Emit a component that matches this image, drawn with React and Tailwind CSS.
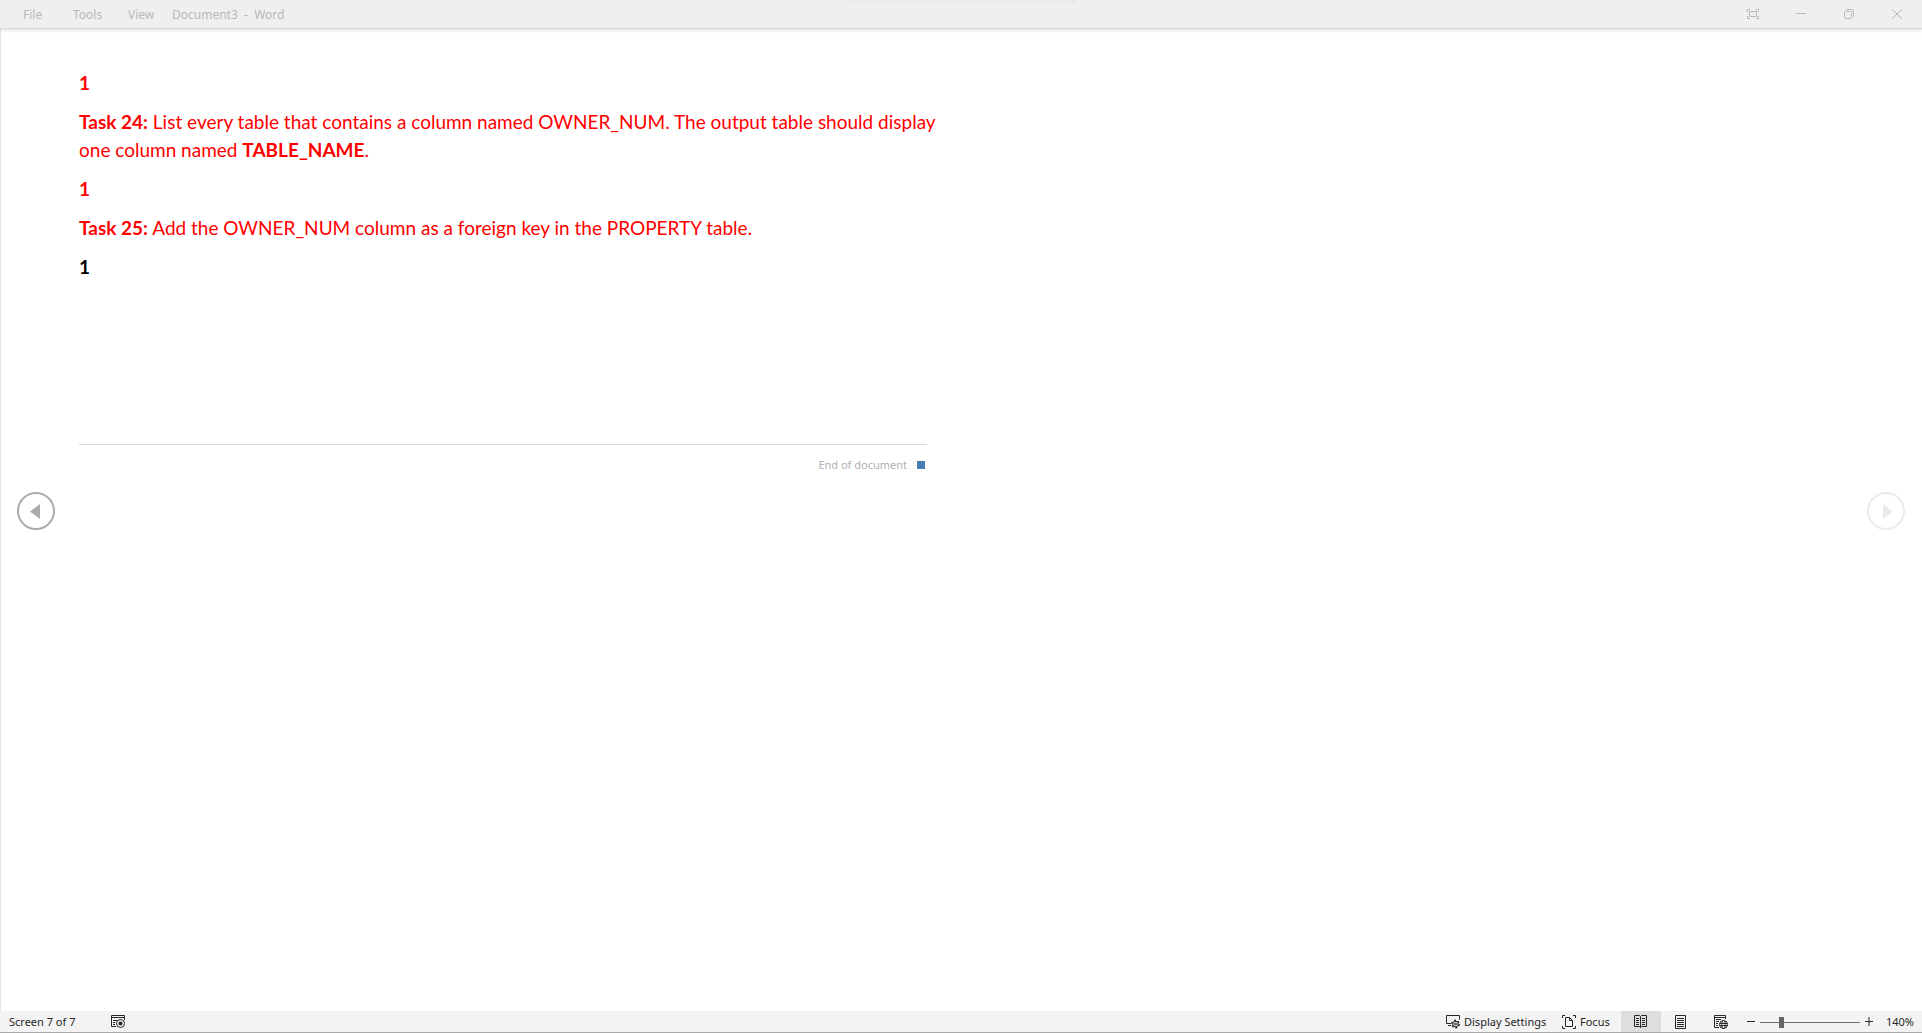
import {useState} from 'react';

const tasks = [
  {
    id: 24,
    text: ' List every table that contains a column named OWNER_NUM. The output table should display one column named ',
    strong: 'TABLE_NAME',
    end: '.',
    answerClass: '',
  },
  {
    id: 25,
    text: ' Add the OWNER_NUM column as a foreign key in the PROPERTY table.',
    answerClass: 'text-black',
  },
];

const Icon = ({width = 14, height = 14, children}) => (
  <svg
    width={width}
    height={height}
    viewBox={`0 0 ${width} ${height}`}
    fill="none"
    stroke="currentColor"
    aria-hidden="true"
    className="shrink-0">
    {children}
  </svg>
);

const FullScreenIcon = () => (
  <Icon width={12} height={10}>
    <path d="M3 .5H.5V3M9 .5h2.500V3M3 9.500H.5V7M9 9.500h2.500V7M2.500 2.500h7v5h-7z" />
  </Icon>
);

const MinimizeIcon = () => (
  <Icon width={10} height={10}>
    <path d="M0 4.500h10" />
  </Icon>
);

const RestoreIcon = () => (
  <Icon width={10} height={10}>
    <rect x=".5" y="2.500" width="7" height="7" rx="1" />
    <path d="M2.500.5H8A1.500 1.500 0 0 1 9.500 2v5.500" />
  </Icon>
);

const CloseIcon = () => (
  <Icon width={10} height={10}>
    <path d="M0 0l10 10M10 0L0 10" />
  </Icon>
);

const MacroIcon = () => (
  <Icon>
    <path d="M5 11.500H.5V.5h13V5M.5 2.500h13M2 5.500h4M2 7.500h2M2 9.500h2" />
    <circle cx="9.500" cy="8.500" r="4" />
    <circle cx="9.500" cy="8.500" r="2" fill="currentColor" stroke="none" />
  </Icon>
);

const DisplayIcon = () => (
  <Icon>
    <path d="M13.500 4.500V.5H.5v8H5M2 10.500h3" />
    <circle cx="9.500" cy="9" r="3.600" strokeWidth="1.600" strokeDasharray="1.900 1.870" />
    <circle cx="9.500" cy="9" r="2.800" />
    <circle cx="9.500" cy="9" r="1" />
  </Icon>
);

const FocusIcon = () => (
  <Icon>
    <path d="M3 .5H.5V3M11 .5h2.500V3M3 13.500H.5V11M11 13.500h2.500V11" />
    <path d="M3.500 2.500h4l3 3v6h-7zM7.500 2.500v3h3" />
  </Icon>
);

const ReadIcon = () => (
  <Icon>
    <path d="M6.500 12.500v-11M6.500 1.500L5.500.5h-5v11h5l1 1 1-1h5V.5h-5z" />
    <path d="M2 3.500h3M2 5.500h3M2 7.500h3M2 9.500h3M8 3.500h3M8 5.500h3M8 7.500h3M8 9.500h3" />
  </Icon>
);

const PrintIcon = () => (
  <Icon width={12}>
    <path d="M.5.5h10v13H.5zM2 3.500h7M2 5.500h7M2 7.500h7M2 9.500h7M2 11.500h7" />
  </Icon>
);

const WebIcon = () => (
  <Icon>
    <path d="M5 12.500H.5V.5h11V4M.5 2.500h11M2 4.500h5M2 6.500h3M2 8.500h2M2 10.500h2" />
    <circle cx="9.500" cy="9.500" r="4" />
    <ellipse cx="9.500" cy="9.500" rx="1.800" ry="4" />
    <path d="M5.500 8.500h8M5.500 10.500h8" />
  </Icon>
);

const windowButtons = [
  {label: 'Full screen', icon: FullScreenIcon},
  {label: 'Minimize', icon: MinimizeIcon},
  {label: 'Restore', icon: RestoreIcon},
  {label: 'Close', icon: CloseIcon},
];

const views = [
  {id: 'read', label: 'Read Mode', icon: ReadIcon},
  {id: 'print', label: 'Print Layout', icon: PrintIcon},
  {id: 'web', label: 'Web Layout', icon: WebIcon},
];

const TitleBar = () => (
  <header className="relative z-10 flex h-7 items-center bg-[#efefef] text-xs text-[#b8b8b8] shadow-[0_1px_0_#d9d9d9,0_2px_4px_rgba(0,0,0,0.15)]">
    <div className="absolute inset-x-0 top-0 mx-auto h-1 w-[230px] bg-linear-to-b from-[#e8e8e8] to-[#efefef]" />
    <nav className="flex pt-0.5 pl-[23px]">
      <button type="button" className="w-[50px] text-left">File</button>
      <button type="button" className="w-[55px] text-left">Tools</button>
      <button type="button" className="w-11 text-left">View</button>
    </nav>
    <h1 className="pt-0.5 whitespace-pre">Document3  -  Word</h1>
    <div className="ml-auto flex h-full pr-px">
      {windowButtons.map(({label, icon: Glyph}) => (
        <button
          key={label}
          type="button"
          aria-label={label}
          className="flex w-12 items-center justify-center">
          <Glyph />
        </button>
      ))}
    </div>
  </header>
);

const PageButton = ({label, next, disabled}) => (
  <button
    type="button"
    aria-label={label}
    disabled={disabled}
    className="shrink-0 text-[#ababab] disabled:text-[#ebebeb]">
    <svg width="38" height="38" viewBox="0 0 38 38" aria-hidden="true">
      <circle cx="19" cy="19" r="18" fill="none" stroke="currentColor" strokeWidth="2" />
      <path d={next ? 'M16 12v15l10-7.500z' : 'M23 12v15l-10-7.500z'} fill="currentColor" />
    </svg>
  </button>
);

const StatusBar = () => {
  const [view, setView] = useState('read');
  const [zoom, setZoom] = useState(140);

  return (
    <footer className="flex h-[22px] border-b border-[#a8a8a8] bg-[#f3f3f3] px-2 text-[11px] text-[#262626]">
      <div className="flex items-center pt-px pl-px">
        <span className="w-[102px]">Screen 7 of 7</span>
        <button type="button" aria-label="Record macro">
          <MacroIcon />
        </button>
      </div>
      <div className="ml-auto flex">
        <button type="button" className="flex w-[116px] items-center gap-1 pt-px">
          <DisplayIcon />
          Display Settings
        </button>
        <button type="button" className="flex w-[59px] items-center gap-1 pt-px">
          <FocusIcon />
          Focus
        </button>
        {views.map(({id, label, icon: Glyph}) => (
          <button
            key={id}
            type="button"
            aria-label={label}
            aria-pressed={view === id}
            onClick={() => setView(id)}
            className="flex w-10 items-center justify-center pt-px aria-pressed:bg-[#dedede]">
            <Glyph />
          </button>
        ))}
        <div className="flex items-center pt-px pl-1.5">
          <button
            type="button"
            aria-label="Zoom out"
            onClick={() => setZoom(Math.max(100, zoom - 10))}
            className="mr-[3px]">
            <Icon width={10} height={10}>
              <path d="M0 4.500h8" />
            </Icon>
          </button>
          <input
            type="range"
            aria-label="Zoom"
            min="100"
            max="300"
            value={zoom}
            onChange={e => setZoom(Number(e.target.value))}
            className="h-3 w-[100px] appearance-none bg-[linear-gradient(#6e6e6e,#6e6e6e)] bg-[length:100%_1px] bg-center bg-no-repeat [&::-webkit-slider-thumb]:h-[11px] [&::-webkit-slider-thumb]:w-[5px] [&::-webkit-slider-thumb]:appearance-none [&::-webkit-slider-thumb]:bg-[#666666]"
          />
          <button
            type="button"
            aria-label="Zoom in"
            onClick={() => setZoom(Math.min(300, zoom + 10))}
            className="ml-[5px]">
            <Icon width={10} height={10}>
              <path d="M0 4.500h8M4 0v9" />
            </Icon>
          </button>
          <span className="w-[39px] text-right">{`${zoom}%`}</span>
        </div>
      </div>
    </footer>
  );
};

const App = () => {
  return (
    <div className="flex min-h-screen flex-col bg-white font-['Noto_Sans',sans-serif]">
      <TitleBar />
      <main className="flex flex-1 items-center gap-6 border-l border-[#e3e3e3] pr-[17px] pb-[18px] pl-4">
        <PageButton label="Previous screen" />
        <div className="grid flex-1 grid-cols-2 gap-[68px] self-start pt-[41px]">
          <article>
            <div className="-mr-3 space-y-[11px] font-['Lato',sans-serif] text-[19px]/7 text-[#ff0000]">
              <p className="font-bold">1</p>
              {tasks.map(task => (
                <div key={task.id} className="space-y-[11px]">
                  <p>
                    <b>{`Task ${task.id}:`}</b>
                    {task.text}
                    {task.strong && <b>{task.strong}</b>}
                    {task.end}
                  </p>
                  <p className="font-bold">
                    <span className={task.answerClass}>1</span>
                  </p>
                </div>
              ))}
            </div>
            <div className="mt-[163px] flex items-center justify-end gap-2.5 border-t border-[#dcdcdc] pt-3 pr-0.5 text-[11px]/4 text-[#b0b0b0]">
              End of document
              <span className="size-2 bg-[#4a7cb2]" />
            </div>
          </article>
        </div>
        <PageButton label="Next screen" next disabled />
      </main>
      <StatusBar />
    </div>
  );
};

export default App;
